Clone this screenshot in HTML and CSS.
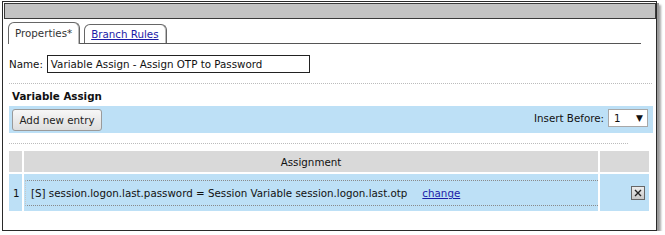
FILE: index.html
```html
<!DOCTYPE html>
<html>
<head>
<meta charset="utf-8">
<link rel="stylesheet" href="styles.css">
</head>
<body>
<div class="window">
  <div class="titlebar"></div>
  <div class="panel">
    <div class="tabs">
      <div class="tab active">Properties*</div>
      <div class="tab"><a href="#" class="link">Branch Rules</a></div>
    </div>
    <div class="name-row">
      <span class="label">Name:</span>
      <div class="input">Variable Assign - Assign OTP to Password</div>
    </div>
    <div class="dotted"></div>
    <div class="section-title">Variable Assign</div>
    <div class="toolbar">
      <button class="btn">Add new entry</button>
      <div class="insert">
        <span>Insert Before:</span>
        <div class="select"><span>1</span><span class="arrow">▼</span></div>
      </div>
    </div>
    <div class="dotted short"></div>
    <div class="grid">
      <div class="hcell"></div>
      <div class="hcell center">Assignment</div>
      <div class="hcell"></div>
      <div class="dcell num">1</div>
      <div class="dcell main">
        <div class="entry">[S] session.logon.last.password = Session Variable session.logon.last.otp<a href="#" class="link change">change</a></div>
      </div>
      <div class="dcell del">
        <div class="xbtn"><svg width="10" height="10" viewBox="0 0 10 10"><path d="M2 2 L8 8 M8 2 L2 8" stroke="#222" stroke-width="1.4"/></svg></div>
      </div>
    </div>
  </div>
</div>
</body>
</html>
```
FILE: styles.css
```css
html, body { margin: 0; padding: 0; background: #fff; }
body {
  font-family: "DejaVu Sans", Verdana, sans-serif;
  font-size: 10.3px;
  color: #111;
}
.window {
  margin: 1px 0 0 2px;
  width: 653px;
  height: 228px;
  border: 1px solid #2a2a2a;
  box-shadow: 2px 2px 0 #9a9a9a, 4px 4px 2px rgba(0,0,0,0.35);
  background: #fff;
}
.titlebar {
  height: 14px;
  margin: 1px 0 0 1px;
  border: 1px solid #3a3a3a;
  background: #c3c3c3;
}
.panel {
  padding: 4px 0 0 5px;
}
.tabs {
  display: flex;
  gap: 4px;
  width: 633px;
  height: 20px;
  border-bottom: 1px solid #555;
  align-items: flex-end;
}
.tab {
  height: 18px;
  padding: 0 7px 0 6px;
  border: 1px solid #666;
  border-bottom: none;
  border-radius: 6px 6px 0 0;
  display: flex;
  align-items: center;
  box-shadow: inset -1px 0 0 #bbb;
}
.tab.active {
  height: 20px;
  margin-bottom: -1px;
  background: #fff;
  padding-bottom: 1px;
  color: #333;
}
.link { color: #1b1ba8; text-decoration: underline; }
.name-row {
  display: flex;
  align-items: center;
  gap: 4px;
  margin-top: 11px;
  padding-left: 1px;
}
.input {
  width: 258px;
  height: 16px;
  border: 1px solid #222;
  padding-left: 3px;
  display: flex;
  align-items: center;
}
.dotted {
  margin-top: 10px;
  margin-left: 1px;
  width: 643px;
  border-top: 1px dotted #bcbcbc;
}
.dotted.short { width: 619px; margin-top: 10px; }
.section-title {
  font-weight: bold;
  margin: 4px 0 0 4px;
  height: 16px;
  line-height: 16px;
}
.toolbar {
  margin: 2px 0 0 1px;
  width: 636px;
  height: 27px;
  background: #bde0f6;
  display: flex;
  align-items: center;
  justify-content: space-between;
  padding: 0 5px 0 3px;
}
.btn {
  font: inherit;
  color: #222;
  height: 22px;
  width: 90px;
  border: 1px solid #9a9a9a;
  border-radius: 3px;
  background: linear-gradient(#f7f7f7, #dedede);
  padding: 0;
}
.insert {
  display: flex;
  align-items: center;
  gap: 4px;
  margin-top: -3px;
}
.select {
  border: 1px solid #a8a8a8;
  background: #fff;
  display: flex;
  align-items: center;
  justify-content: space-between;
  padding: 0 4px 0 5px;
  box-sizing: border-box;
  width: 40px;
  height: 18px;
}
.arrow { font-size: 9px; }
.grid {
  margin: 7px 0 0 1px;
  width: 640px;
  display: grid;
  grid-template-columns: 13px 1fr 49px;
  grid-template-rows: 21px 37px;
  gap: 2px;
}
.hcell { background: #d9d9d9; display: flex; align-items: center; }
.hcell.center { justify-content: center; }
.dcell { background: #bde0f6; display: flex; align-items: center; }
.num { padding-left: 4px; }
.main { padding-left: 1px; }
.entry {
  flex: 1;
  height: 24px;
  border-top: 1px dotted #8a8a8a;
  border-bottom: 1px dotted #8a8a8a;
  border-left: 1px dotted #c8c8c8;
  padding-left: 5px;
  display: flex;
  align-items: center;
  margin-top: 1px;
}
.change { margin-left: 15px; }
.del { justify-content: flex-end; padding-right: 4px; }
.xbtn {
  width: 12px;
  height: 12px;
  border: 1px solid #666;
  background: linear-gradient(#ececec, #c8c8c8);
  display: flex;
  align-items: center;
  justify-content: center;
}
```
